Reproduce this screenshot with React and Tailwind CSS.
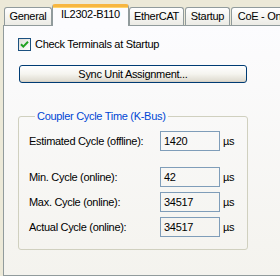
import React from 'react';

/* ── XP style tab ─────────────────────────────────────────────────────── */
const Tab = ({ label, width, active = false }) =>
  active ? (
    <div
      className={`${width} shrink-0 relative z-10 -mb-px h-[22px] flex justify-center pt-[1px] rounded-t-[3px] border-x border-x-[#919b9c] border-t-[3px] border-t-[#f7b640] bg-[#fcfcfe] shadow-[inset_0_1px_0_#ffd36b]`}
    >
      <span className="leading-[13px]">{label}</span>
    </div>
  ) : (
    <div
      className={`${width} shrink-0 h-[18px] flex justify-center pt-[2px] rounded-t-[3px] border-x border-t border-[#919b9c] bg-gradient-to-b from-white to-[#ecebe5] whitespace-nowrap overflow-hidden`}
    >
      <span className="leading-[13px]">{label}</span>
    </div>
  );

const CycleRow = ({ label, value, mt }) => (
  <div className={`${mt} flex items-center h-[20px]`}>
    <span className="w-[131px] leading-[13px] whitespace-nowrap">{label}</span>
    <div className="w-[60px] h-[20px] border border-[#7f9db9] pl-[3px] flex items-center leading-[13px]">{value}</div>
    <span className="ml-[3px] leading-[13px]">µs</span>
  </div>
);

export default function App() {
  return (
    <div className="w-[280px] h-[276px] overflow-hidden bg-[#ece9d8] flex flex-col text-black text-[11px] tracking-[-0.3px] font-['Liberation_Sans',Arial,sans-serif]">
      {/* tab strip */}
      <div className="h-[25px] shrink-0 flex items-end pl-[4px]">
        <Tab label="General" width="w-[48px]" />
        <Tab label="IL2302-B110" width="w-[77px]" active />
        <Tab label="EtherCAT" width="w-[55px]" />
        <div className="w-[1px] shrink-0" />
        <Tab label="Startup" width="w-[45px]" />
        <div className="w-[1px] shrink-0" />
        <Tab label="CoE - Online" width="w-[73px]" />
      </div>

      {/* tab page */}
      <div className="ml-[3px] w-[300px] shrink-0 flex-1 border border-[#919b9c] bg-gradient-to-b from-[#fcfcfe] to-[#f4f3ee] pl-[14px] pt-[12px]">
        <div className="flex items-center gap-[4px] h-[13px]">
          <div className="w-[13px] h-[13px] border border-[#1c5180] bg-gradient-to-br from-[#dcdcd7] to-white flex items-center justify-center">
            <svg width="11" height="11" viewBox="0 0 11 11">
              <path d="M2 5.2 L4.3 7.6 L9 2.8" fill="none" stroke="#21a121" strokeWidth="2" />
            </svg>
          </div>
          <span className="leading-[13px]">Check Terminals at Startup</span>
        </div>

        <button className="mt-[14px] ml-[1px] w-[228px] h-[18px] flex items-center justify-center rounded-[3px] border border-[#003c74] bg-gradient-to-b from-white via-[#f5f4ef] to-[#dcd8cc] shadow-[inset_0_-1px_0_#d6d0c5] leading-[13px] tracking-[-0.3px]">
          Sync Unit Assignment...
        </button>

        <fieldset className="mt-[27px] w-[230px] border border-[#d0d0bf] rounded-[3px] px-[10px] pb-[12px]">
          <legend className="ml-[6px] px-[2px] leading-[13px] text-[#0046d5]">Coupler Cycle Time (K-Bus)</legend>
          <CycleRow label="Estimated Cycle (offline):" value="1420" mt="mt-[8px]" />
          <CycleRow label="Min. Cycle (online):" value="42" mt="mt-[16px]" />
          <CycleRow label="Max. Cycle (online):" value="34517" mt="mt-[5px]" />
          <CycleRow label="Actual Cycle (online):" value="34517" mt="mt-[5px]" />
        </fieldset>
      </div>
    </div>
  );
}
